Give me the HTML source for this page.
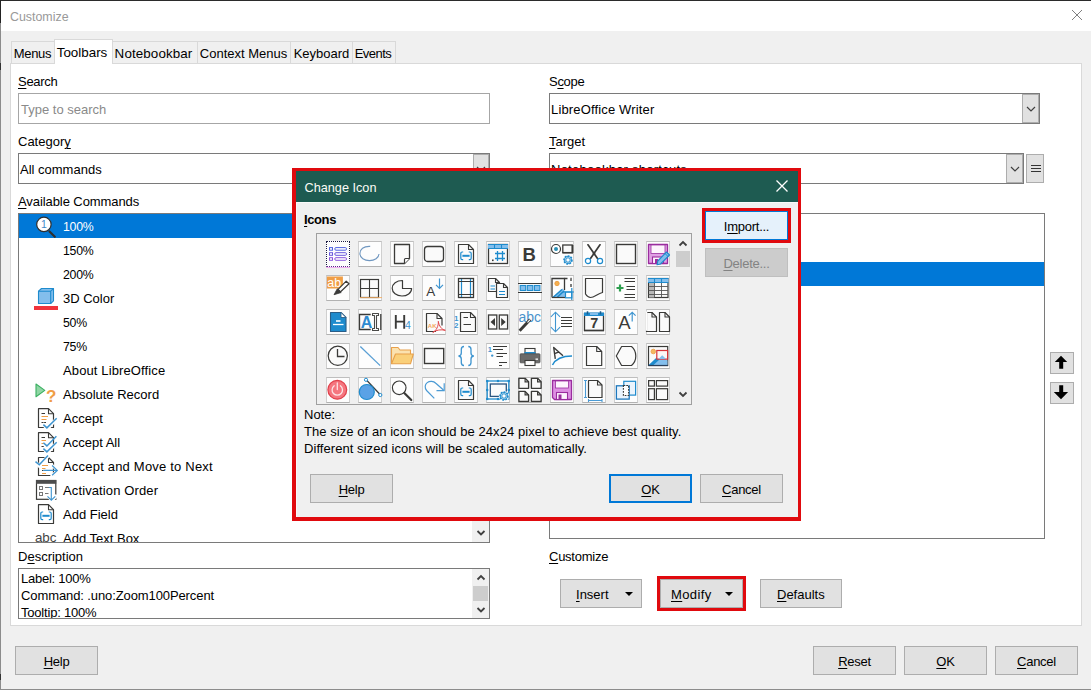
<!DOCTYPE html>
<html lang="en">
<head>
<meta charset="utf-8">
<title>Customize</title>
<style>
*{box-sizing:border-box;margin:0;padding:0}
html,body{width:1091px;height:690px;overflow:hidden}
body{background:#f0f0f0;font-family:"Liberation Sans",sans-serif;font-size:13px;color:#000;position:relative;line-height:16px}
.abs{position:absolute}
u{text-decoration:underline;text-underline-offset:1.5px;text-decoration-thickness:1px}
.lbl{position:absolute;white-space:nowrap;height:16px;line-height:16px}
.field{position:absolute;background:#fff;border:1px solid #7a7a7a}
.btn{position:absolute;background:#e1e1e1;border:1px solid #adadad;text-align:center;white-space:nowrap;line-height:16px}
.btn span{position:absolute;left:0;right:0;text-align:center;letter-spacing:-0.25px}
.ddbtn{position:absolute;background:#e1e1e1;border:1px solid #adadad}
/* title bar */
#titlebar{left:0;top:0;width:1091px;height:31px;background:#fff}
#topline{left:0;top:0;width:1091px;height:1px;background:#2b2b2b}
#leftline{left:0;top:0;width:1px;height:690px;background:#8c8c8c}
#leftdark{left:0;top:0;width:1px;height:23px;background:#222}
#botline{left:0;top:689px;width:1091px;height:1px;background:#8c8c8c}
#title{left:10px;top:9px;font-size:12.4px;color:#999}
/* tabs */
.tab{position:absolute;top:41px;height:23px;font-size:13px;background:#f0f0f0;border:1px solid #d9d9d9;border-bottom:none;white-space:nowrap;text-align:center;line-height:16px;padding-top:4px}
.tab.sel{top:39px;height:25px;background:#fff;z-index:3;padding-top:5px}
#panel{left:10px;top:63px;width:1072px;height:563px;background:#fff;border:1px solid #d9d9d9}
/* list */
.row{position:absolute;left:0;height:24px;width:100%;white-space:nowrap}
.row span{position:absolute;left:44px;top:5px;line-height:16px}
.row svg{position:absolute;left:15px;top:0}
.cell{position:absolute;width:24px;height:26px;background:#fdfdfd;border:1px solid #cfcfcf;border-top-color:#bebebe;border-bottom-color:#b2b2b2}
.cell svg{position:absolute;left:-1px;top:0px;overflow:visible}
.cell.sel{border:1px dotted #1c1c44;border-bottom-color:#5a2a8a;box-shadow:0 1px 0 #f0b0f0}
.cell text{font-family:"Liberation Sans",sans-serif}
</style>
</head>
<body>
<!-- window chrome -->
<div class="abs" id="titlebar"></div>
<div class="abs" id="topline"></div>
<div class="abs" id="leftline"></div>
<div class="abs" id="leftdark"></div>
<div class="abs" id="botline"></div>
<div class="abs" style="left:0;top:63px;width:1px;height:7px;background:#333"></div>
<div class="abs" style="left:0;top:674px;width:1px;height:6px;background:#333"></div>
<div class="lbl" id="title">Customize</div>
<svg class="abs" style="left:1071px;top:9px" width="13" height="13" viewBox="0 0 13 13"><path d="M1 1 L11 11 M11 1 L1 11" stroke="#808080" stroke-width="1" fill="none"/></svg>

<!-- tabs -->
<div class="tab" style="left:11px;width:44px;letter-spacing:-0.3px;padding-right:1px">Menus</div>
<div class="tab sel" style="left:54px;width:59px;padding-right:3px;font-size:13.4px">Toolbars</div>
<div class="tab" style="left:112px;width:86px;padding-right:3px;letter-spacing:0.1px;font-size:13.4px">Notebookbar</div>
<div class="tab" style="left:197px;width:94px;padding-right:1px">Context Menus</div>
<div class="tab" style="left:290px;width:63px">Keyboard</div>
<div class="tab" style="left:352px;width:44px;letter-spacing:-0.5px;padding-right:2px">Events</div>
<div class="abs" id="panel"></div>

<!-- left column -->
<div class="lbl" style="left:18px;top:74px;letter-spacing:-0.3px"><u>S</u>earch</div>
<div class="field" style="left:18px;top:93px;width:472px;height:31px;border-color:#a6a6a6"></div>
<div class="lbl" style="left:21px;top:102px;color:#8a8a8a">Type to search</div>
<div class="lbl" style="left:18px;top:134px">Categor<u>y</u></div>
<div class="field" style="left:18px;top:153px;width:472px;height:31px"></div>
<div class="ddbtn" style="left:473px;top:154px;width:16px;height:29px"></div>
<svg class="abs" style="left:475.5px;top:166px" width="10" height="6" viewBox="0 0 10 6"><path d="M1 1 L5 5 L9 1" fill="none" stroke="#404040" stroke-width="1.2"/></svg>
<div class="lbl" style="left:20px;top:162px">All commands</div>
<div class="lbl" style="left:18px;top:194px;letter-spacing:-0.08px"><u>A</u>vailable Commands</div>

<div class="field" id="leftlist" style="left:18px;top:213px;width:472px;height:330px;overflow:hidden">
  <div class="row" style="top:0;background:#0078d7;color:#fff"><svg width="24" height="24" viewBox="0 0 24 24" style="overflow:visible"><path d="M15.5 17.5 L20.8 22.8" stroke="#2e2e2e" stroke-width="2.2" stroke-linecap="round"/><circle cx="9.9" cy="10.4" r="7.2" fill="#fff" stroke="#2e2e2e" stroke-width="1.2"/><text x="9.9" y="14.3" font-size="10.5" text-anchor="middle" fill="#3f88c8" font-family="Liberation Sans, sans-serif">1</text></svg><span style="font-size:12.3px;letter-spacing:-0.25px">100%</span></div>
  <div class="row" style="top:24px"><span style="font-size:12.3px;letter-spacing:-0.25px">150%</span></div>
  <div class="row" style="top:48px"><span style="font-size:12.3px;letter-spacing:-0.25px">200%</span></div>
  <div class="row" style="top:72px"><svg width="24" height="24" viewBox="0 0 24 24" style="overflow:visible"><path d="M4.5 5.2 L7.5 2.5 H19.5 V14.8 L16.7 17.5 H4.5 Z" fill="#83beec" stroke="#1e8bcd" stroke-width="1.1" stroke-linejoin="round"/><path d="M4.5 5.2 H16.7 V17.5 M16.7 5.2 L19.5 2.5" fill="none" stroke="#1e8bcd" stroke-width="1.1" stroke-linejoin="round"/><rect x="0" y="20" width="24" height="4" fill="#f0343c"/></svg><span>3D Color</span></div>
  <div class="row" style="top:96px"><span style="font-size:12.3px;letter-spacing:-0.25px">50%</span></div>
  <div class="row" style="top:120px"><span style="font-size:12.3px;letter-spacing:-0.25px">75%</span></div>
  <div class="row" style="top:144px"><span style="letter-spacing:0.12px">About LibreOffice</span></div>
  <div class="row" style="top:168px"><svg width="24" height="24" viewBox="0 0 24 24" style="overflow:visible"><path d="M2 2 V14.8 L10.8 8.4 Z" fill="#8fd6a4" stroke="#3bb062" stroke-width="1.1" stroke-linejoin="round"/><text x="17.2" y="19.5" font-size="17" font-weight="bold" text-anchor="middle" fill="#f09e46" font-family="Liberation Sans, sans-serif">?</text></svg><span>Absolute Record</span></div>
  <div class="row" style="top:192px"><svg width="24" height="24" viewBox="0 0 24 24" style="overflow:visible"><path d="M4.5 2.7 H14.5 L19.5 7.7 V21.5 H4.5 Z" fill="#fff" stroke="#3a3a38" stroke-width="1.2" stroke-linejoin="round"/><path d="M14.5 2.7 V7.7 H19.5" fill="none" stroke="#3a3a38" stroke-width="1.1" stroke-linejoin="round"/><path d="M7.5 7.5 H11 M7.5 16.5 H12" stroke="#3a3a38" stroke-width="1"/><path d="M7.5 10.5 H14 M7.5 13.5 H12.5" stroke="#f09e46" stroke-width="1"/><path d="M8.5 17.5 L13.5 23 L24 11" stroke="#fff" stroke-width="3.4" fill="none"/><path d="M9.4 18.6 L12.9 21.9 L22.7 12.2" stroke="#3f95d0" stroke-width="1.5" fill="none"/></svg><span>Accept</span></div>
  <div class="row" style="top:216px"><svg width="24" height="24" viewBox="0 0 24 24" style="overflow:visible"><path d="M4.5 2.7 H14.5 L19.5 7.7 V21.5 H4.5 Z" fill="#fff" stroke="#3a3a38" stroke-width="1.2" stroke-linejoin="round"/><path d="M14.5 2.7 V7.7 H19.5" fill="none" stroke="#3a3a38" stroke-width="1.1" stroke-linejoin="round"/><path d="M7.5 7.5 H11 M7.5 16.5 H10" stroke="#3a3a38" stroke-width="1"/><path d="M7.5 10.5 H12 M7.5 13.5 H9.5" stroke="#f09e46" stroke-width="1"/><path d="M8.5 17.5 L13.5 23 L24 11" stroke="#fff" stroke-width="3.2" fill="none"/><path d="M9.4 12.8 L12.9 15.9 L22.4 6.2" stroke="#3f95d0" stroke-width="1.5" fill="none"/><path d="M9.4 18.6 L12.9 21.9 L22.7 12.2" stroke="#3f95d0" stroke-width="1.5" fill="none"/></svg><span>Accept All</span></div>
  <div class="row" style="top:240px"><svg width="24" height="24" viewBox="0 0 24 24" style="overflow:visible"><path d="M4.5 3.5 H14.5 L19.5 8.5 V21.5 H4.5 Z" fill="#fff" stroke="#3a3a38" stroke-width="1.2" stroke-linejoin="round"/><path d="M14.5 3.5 V8.5 H19.5" fill="none" stroke="#3a3a38" stroke-width="1.1" stroke-linejoin="round"/><path d="M0.5 7 L5.3 12 L15 0.8" stroke="#fff" stroke-width="3.4" fill="none"/><path d="M8 11.5 H14 M8 14.5 H11.5 M8 19.5 H12" stroke="#f09e46" stroke-width="1"/><path d="M8 16.5 H9.5" stroke="#3a3a38" stroke-width="1"/><path d="M10 12 H24 V21 H10 Z" fill="#fff" opacity="0.0"/><path d="M1.5 7.7 L5.3 10.8 L14 1.5" stroke="#3f95d0" stroke-width="1.5" fill="none"/><path d="M17 10.5 L24 16.4 L17 22.3" stroke="#fff" stroke-width="3" fill="none"/><path d="M9.4 16.4 H23 M18.1 11.5 L23.3 16.4 L18.1 21.3" stroke="#3f95d0" stroke-width="1.2" fill="none"/></svg><span style="letter-spacing:0.2px">Accept and Move to Next</span></div>
  <div class="row" style="top:264px"><svg width="24" height="24" viewBox="0 0 24 24" style="overflow:visible"><rect x="2.5" y="2.5" width="19.3" height="18.8" fill="#fff" stroke="#3a3a38" stroke-width="1.2"/><rect x="2" y="2" width="20.3" height="3.8" fill="#4d4d4d"/><rect x="5.5" y="8.5" width="3" height="3" fill="#fff" stroke="#777" stroke-width="1"/><rect x="5.5" y="14.5" width="3" height="3" fill="#fff" stroke="#777" stroke-width="1"/><path d="M11 9.5 H15 M11 15.5 H14.5" stroke="#777" stroke-width="1"/><path d="M14 18 L18 23 L23 17" stroke="#fff" stroke-width="3" fill="none"/><path d="M15 9.5 H17.3 V22 M13.5 18.3 L17.3 22.2 L21.3 18.3" stroke="#3f95d0" stroke-width="1.1" fill="none"/></svg><span style="letter-spacing:0.12px">Activation Order</span></div>
  <div class="row" style="top:288px"><svg width="24" height="24" viewBox="0 0 24 24" style="overflow:visible"><path d="M4.5 2.7 H14.5 L19.5 7.7 V21.5 H4.5 Z" fill="#fff" stroke="#3a3a38" stroke-width="1.2" stroke-linejoin="round"/><path d="M14.5 2.7 V7.7 H19.5" fill="none" stroke="#3a3a38" stroke-width="1.1" stroke-linejoin="round"/><path d="M9.2 10 H8.2 Q6.8 10 6.8 11.4 V16.2 Q6.8 17.6 8.2 17.6 H9.2 M14.8 10 H15.8 Q17.2 10 17.2 11.4 V16.2 Q17.2 17.6 15.8 17.6 H14.8" fill="none" stroke="#1e8bcd" stroke-width="1.2"/><path d="M8.4 13.8 H15.6" stroke="#1e8bcd" stroke-width="2"/></svg><span>Add Field</span></div>
  <div class="row" style="top:312px"><svg width="24" height="24" viewBox="0 0 24 24" style="overflow:visible"><text x="11.7" y="15.9" font-size="13.4" text-anchor="middle" fill="#444" font-family="Liberation Sans, sans-serif">abc</text></svg><span>Add Text Box</span></div>
  <div class="abs" style="right:0;top:0;width:17px;height:328px;background:#f0f0f0"></div>
</div>

<div class="lbl" style="left:18px;top:549px">D<u>e</u>scription</div>
<div class="field" id="desc" style="left:18px;top:568px;width:472px;height:51px;overflow:hidden">
  <div class="lbl" style="left:2px;top:2px;letter-spacing:-0.25px">Label: 100%</div>
  <div class="lbl" style="left:2px;top:19px;letter-spacing:-0.1px">Command: .uno:Zoom100Percent</div>
  <div class="lbl" style="left:2px;top:36px;letter-spacing:-0.2px">Tooltip: 100%</div>
  <div class="abs" style="right:0;top:0;width:17px;height:49px;background:#f0f0f0"></div>
  <div class="abs" style="right:1px;top:17px;width:15px;height:15px;background:#cdcdcd"></div>
</div>

<!-- right column -->
<div class="lbl" style="left:549px;top:74px;letter-spacing:-0.3px">S<u>c</u>ope</div>
<div class="field" style="left:549px;top:93px;width:491px;height:31px"></div>
<div class="ddbtn" style="left:1022px;top:94px;width:17px;height:29px"></div>
<svg class="abs" style="left:1025.5px;top:106px" width="10" height="6" viewBox="0 0 10 6"><path d="M1 1 L5 5 L9 1" fill="none" stroke="#404040" stroke-width="1.2"/></svg>
<div class="lbl" style="left:551px;top:102px;letter-spacing:0.15px">LibreOffice Writer</div>
<div class="lbl" style="left:549px;top:134px"><u>T</u>arget</div>
<div class="field" style="left:549px;top:153px;width:475px;height:31px"></div>
<div class="ddbtn" style="left:1006px;top:154px;width:17px;height:29px"></div>
<svg class="abs" style="left:1009.5px;top:166px" width="10" height="6" viewBox="0 0 10 6"><path d="M1 1 L5 5 L9 1" fill="none" stroke="#404040" stroke-width="1.2"/></svg>
<div class="lbl" style="left:551px;top:162px;letter-spacing:0.25px">Notebookbar shortcuts</div>
<div class="btn" style="left:1026px;top:154px;width:18px;height:29px"></div>
<svg class="abs" style="left:1030px;top:163px" width="12" height="10" viewBox="0 0 12 10"><path d="M1 2.5 H11 M1 5.5 H11 M1 8.5 H11" stroke="#333" stroke-width="1.1"/></svg>

<div class="field" id="rightlist" style="left:549px;top:213px;width:496px;height:326px">
  <div class="abs" style="left:0;top:48px;width:494px;height:24px;background:#0078d7"></div>
</div>
<div class="btn" style="left:1050px;top:352px;width:24px;height:22px"></div>
<svg class="abs" style="left:1054px;top:355px" width="14" height="14" viewBox="0 0 14 14"><path d="M7 0.8 L13.2 7 H9.2 V13.8 H5.2 V7 H0.8 Z" fill="#000"/></svg>
<div class="btn" style="left:1050px;top:382px;width:24px;height:22px"></div>
<svg class="abs" style="left:1053px;top:385px" width="16" height="15" viewBox="0 0 16 15"><path d="M6.2 0.2 H10.2 V7 H15.1 L8 14.2 L0.8 7 H6.2 Z" fill="#000"/></svg>

<div class="lbl" style="left:549px;top:549px;letter-spacing:-0.25px"><u>C</u>ustomize</div>
<div class="btn" style="left:560px;top:579px;width:82px;height:29px"></div>
<div class="lbl" style="left:576px;top:587px"><u>I</u>nsert</div>
<svg class="abs" style="left:625px;top:591.5px" width="8" height="4" viewBox="0 0 8 4"><path d="M0 0 H8 L4 4 Z" fill="#000"/></svg>
<div class="abs" style="left:657px;top:576px;width:89px;height:35px;background:#e00a0e"></div>
<div class="btn" style="left:660px;top:579px;width:83px;height:29px"></div>
<div class="lbl" style="left:671px;top:587px;letter-spacing:0.4px"><u>M</u>odify</div>
<svg class="abs" style="left:725px;top:591.5px" width="8" height="4" viewBox="0 0 8 4"><path d="M0 0 H8 L4 4 Z" fill="#000"/></svg>
<div class="btn" style="left:760px;top:579px;width:82px;height:29px"></div>
<div class="lbl" style="left:777px;top:587px"><u>D</u>efaults</div>

<!-- bottom buttons -->
<div class="btn" style="left:15px;top:646px;width:83px;height:29px"><span style="top:7px"><u>H</u>elp</span></div>
<div class="btn" style="left:813px;top:646px;width:83px;height:29px"><span style="top:7px"><u>R</u>eset</span></div>
<div class="btn" style="left:904px;top:646px;width:83px;height:29px"><span style="top:7px"><u>O</u>K</span></div>
<div class="btn" style="left:995px;top:646px;width:83px;height:29px"><span style="top:7px"><u>C</u>ancel</span></div>

<svg class="abs" style="left:473px;top:528px" width="16" height="10" viewBox="0 0 16 10"><path d="M4.5 3 L8 6.5 L11.5 3" fill="none" stroke="#404040" stroke-width="1.8"/></svg>
<svg class="abs" style="left:473px;top:573px" width="16" height="10" viewBox="0 0 16 10"><path d="M4.5 6.5 L8 3 L11.5 6.5" fill="none" stroke="#404040" stroke-width="1.8"/></svg>
<svg class="abs" style="left:473px;top:605px" width="16" height="10" viewBox="0 0 16 10"><path d="M4.5 3 L8 6.5 L11.5 3" fill="none" stroke="#404040" stroke-width="1.8"/></svg>
<!-- DIALOG -->
<div class="abs" id="dlg" style="left:292px;top:168px;width:509px;height:353px;background:#e00a0e">
  <div class="abs" style="left:3.5px;top:3.4px;width:502px;height:345.6px;background:#f0f0f0"></div>
  <div class="abs" style="left:3.5px;top:3.4px;width:502px;height:30.4px;background:#1e5b51"></div>
  <div class="abs" style="left:3.5px;top:33.8px;width:502px;height:1px;background:#fafafa"></div>
  <div class="abs" style="left:3.5px;top:33.8px;width:1px;height:315px;background:#f8f8f8"></div>
  <div class="lbl" style="left:12.5px;top:12px;color:#fbfbf6;font-size:12.7px">Change Icon</div>
  <svg class="abs" style="left:483px;top:11px" width="14" height="14" viewBox="0 0 14 14"><path d="M1.5 1.5 L12.5 12.5 M12.5 1.5 L1.5 12.5" stroke="#fff" stroke-width="1.3" fill="none"/></svg>
  <div class="lbl" style="left:12px;top:44px;font-weight:bold;letter-spacing:-0.4px"><u>I</u>cons</div>
  <!-- icon grid -->
  <div class="abs" id="grid" style="left:24px;top:65px;width:376px;height:172px;border:1px solid #a0a0a0;background:#f0f0f0;overflow:hidden">
<div class="cell sel" style="left:9px;top:7px"><svg width="24" height="24" viewBox="0 0 24 24"><rect x="3.5" y="5.6" width="3" height="2.6" fill="#fff" stroke="#4f62e0" stroke-width="1"/><rect x="8.8" y="5.6" width="11.7" height="2.6" rx="1.2" fill="#fff" stroke="#4f62e0" stroke-width="1"/><rect x="3.5" y="10.7" width="3" height="2.6" fill="#fff" stroke="#6a59dc" stroke-width="1"/><rect x="8.8" y="10.7" width="11.7" height="2.6" rx="1.2" fill="#fff" stroke="#6a59dc" stroke-width="1"/><rect x="3.5" y="15.7" width="3" height="2.6" fill="#fff" stroke="#8a55dc" stroke-width="1"/><rect x="8.8" y="15.7" width="11.7" height="2.6" rx="1.2" fill="#fff" stroke="#8a55dc" stroke-width="1"/></svg></div>
<div class="cell" style="left:41px;top:7px"><svg width="24" height="24" viewBox="0 0 24 24"><path d="M12.2 4.4 C5.5 4 1.9 7.5 1.9 11.5 C1.9 16 6.5 18.6 11.5 18.6 C16.5 18.6 20.9 16 20.9 12" fill="none" stroke="#7097c0" stroke-width="1.1"/></svg></div>
<div class="cell" style="left:73px;top:7px"><svg width="24" height="24" viewBox="0 0 24 24"><path d="M4.5 2.5 H19.5 V16.5 L14.5 21.5 H4.5 Z" fill="#fafafa" stroke="#3a3a38" stroke-width="1.3" stroke-linejoin="round"/><path d="M14.5 21.5 V17.5 Q14.5 16.5 15.5 16.5 H19.5" fill="#fff" stroke="#3a3a38" stroke-width="1.2" stroke-linejoin="round"/></svg></div>
<div class="cell" style="left:105px;top:7px"><svg width="24" height="24" viewBox="0 0 24 24"><rect x="2.5" y="4.5" width="19" height="15" rx="3" fill="#fafafa" stroke="#3a3a38" stroke-width="1.3"/></svg></div>
<div class="cell" style="left:137px;top:7px"><svg width="24" height="24" viewBox="0 0 24 24"><path d="M4.5 2.5 H14.5 L19.5 7.5 V21.5 H4.5 Z" fill="#fafafa" stroke="#3a3a38" stroke-width="1.2" stroke-linejoin="round"/><path d="M14.5 2.5 V7.5 H19.5" fill="none" stroke="#3a3a38" stroke-width="1.1" stroke-linejoin="round"/><path d="M9.2 10 H8.2 Q6.8 10 6.8 11.4 V16.2 Q6.8 17.6 8.2 17.6 H9.2 M14.8 10 H15.8 Q17.2 10 17.2 11.4 V16.2 Q17.2 17.6 15.8 17.6 H14.8" fill="none" stroke="#1e8bcd" stroke-width="1.2"/><path d="M8.4 13.8 H15.6" stroke="#1e8bcd" stroke-width="2"/></svg></div>
<div class="cell" style="left:169px;top:7px"><svg width="24" height="24" viewBox="0 0 24 24"><rect x="2.5" y="2.5" width="19" height="19" fill="#fafafa" stroke="#3a3a38" stroke-width="1.3"/><rect x="2" y="2" width="20" height="4.5" fill="#83beec"/><path d="M2 2.5 H22 M2 6.5 H22 M8.5 2 V6.5 M15.5 2 V6.5" stroke="#1e8bcd" stroke-width="1.1"/><path d="M11.5 9 V19 M16.5 9 V19 M9 11.5 H19 M9 16.5 H19" stroke="#1e8bcd" stroke-width="1.3" fill="none"/><rect x="6" y="17.5" width="1.6" height="1.6" fill="#3a3a38"/></svg></div>
<div class="cell" style="left:201px;top:7px"><svg width="24" height="24" viewBox="0 0 24 24"><text x="11.2" y="18.6" font-size="18.5" font-weight="bold" text-anchor="middle" fill="#3a3a38">B</text></svg></div>
<div class="cell" style="left:233px;top:7px"><svg width="24" height="24" viewBox="0 0 24 24"><circle cx="6" cy="7" r="4.5" fill="#fff" stroke="#3a3a38" stroke-width="1.2"/><circle cx="6" cy="7" r="2" fill="#2a8fb5"/><rect x="12.8" y="3" width="9.4" height="7.6" fill="#fafafa" stroke="#3a3a38" stroke-width="1.3"/><path d="M12.5 10.8 H23 M22.6 3 V11" stroke="#3a3a38" stroke-width="1.6"/><g fill="none" stroke="#1e8bcd" stroke-width="1"><circle cx="18" cy="18" r="2.25"/><circle cx="18" cy="18" r="4.0" stroke-width="1.6" stroke-dasharray="1.8 1.2"/><circle cx="18" cy="18" r="3.5999999999999996" stroke-width="0.9"/></g></svg></div>
<div class="cell" style="left:265px;top:7px"><svg width="24" height="24" viewBox="0 0 24 24"><path d="M6 2.8 L15.5 16.5 M18 2.8 L8.5 16.5" stroke="#3a3a38" stroke-width="1.7" fill="none" stroke-linecap="round"/><path d="M10.5 11.5 L12 9.8 L13.5 11.5 L12 13.6 Z" fill="#3a3a38"/><circle cx="6" cy="19" r="2.6" fill="#fff" stroke="#1e8bcd" stroke-width="1.2"/><circle cx="18" cy="19" r="2.6" fill="#fff" stroke="#1e8bcd" stroke-width="1.2"/></svg></div>
<div class="cell" style="left:297px;top:7px"><svg width="24" height="24" viewBox="0 0 24 24"><rect x="2.5" y="2.5" width="19" height="19" fill="#fafafa" stroke="#3a3a38" stroke-width="1.4"/></svg></div>
<div class="cell" style="left:329px;top:7px"><svg width="24" height="24" viewBox="0 0 24 24"><path d="M2.5 2.5 H21.5 V21.5 H2.5 Z" fill="#e0a0e4" stroke="#9a2d9e" stroke-width="1.3" stroke-linejoin="round"/><rect x="5" y="3" width="14" height="8.5" fill="#fdf3fd" stroke="#9a2d9e" stroke-width="0.8"/><rect x="6.5" y="15" width="11" height="6.5" fill="#fdf3fd" stroke="#9a2d9e" stroke-width="1.1"/><rect x="9" y="17" width="3" height="4.5" fill="#9a2d9e"/><path d="M20.5 10 L23.5 13 L14.5 22 L11 22.8 L11.8 19 Z" fill="#83beec" stroke="#1e8bcd" stroke-width="1.1" stroke-linejoin="round"/><path d="M19 11.5 L22 14.5" stroke="#1e8bcd" stroke-width="1"/></svg></div>
<div class="cell" style="left:9px;top:41px"><svg width="24" height="24" viewBox="0 0 24 24"><rect x="0.9" y="0.5" width="16" height="12" fill="#f09e46"/><text x="8.2" y="11.3" font-size="12.5" text-anchor="middle" fill="#fff">ab</text><path d="M20.2 5.2 L23 7.8 L14.6 15.8 L12.1 13.3 Z" fill="#fff" stroke="#3a3a38" stroke-width="1.2" stroke-linejoin="round"/><path d="M11.3 12.8 L15.2 16.5 L8 18.7 Z" fill="#3a3a38" stroke="#3a3a38" stroke-width="0.8" stroke-linejoin="round"/></svg></div>
<div class="cell" style="left:41px;top:41px"><svg width="24" height="24" viewBox="0 0 24 24"><rect x="2.5" y="3.5" width="18" height="18" fill="#fafafa" stroke="#3a3a38" stroke-width="1.2"/><path d="M11.5 3.5 V21.5 M2.5 12.5 H20.5" stroke="#3a3a38" stroke-width="1.1"/><path d="M2 21.6 H24" stroke="#f2ab62" stroke-width="0.9" fill="none"/></svg></div>
<div class="cell" style="left:73px;top:41px"><svg width="24" height="24" viewBox="0 0 24 24"><path d="M12.5 4.5 V12.5 H21.6 C21.6 17 17 20 12 20 C6.5 20 2.2 16.8 2.2 12.3 C2.2 8 6.5 4.5 12.5 4.5 Z" fill="#fafafa" stroke="#3a3a38" stroke-width="1.2" stroke-linejoin="round"/></svg></div>
<div class="cell" style="left:105px;top:41px"><svg width="24" height="24" viewBox="0 0 24 24"><text x="8.7" y="19.5" font-size="13.5" text-anchor="middle" fill="#3a3a38">A</text><path d="M17.5 2.5 V12 M14 8.8 L17.5 12.3 L21 8.8" fill="none" stroke="#3f95d0" stroke-width="1.2"/></svg></div>
<div class="cell" style="left:137px;top:41px"><svg width="24" height="24" viewBox="0 0 24 24"><path d="M7.5 2.5 V21.5 M16.5 2.5 V21.5" stroke="#1e8bcd" stroke-width="1.2"/><rect x="4.5" y="2.5" width="15" height="19" fill="none" stroke="#3a3a38" stroke-width="1.3"/><path d="M4.5 5.5 H19.5 M4.5 18.5 H19.5" stroke="#3a3a38" stroke-width="1.1"/></svg></div>
<div class="cell" style="left:169px;top:41px"><svg width="24" height="24" viewBox="0 0 24 24"><path d="M2.5 2.5 H9.5 L13.5 6.5 V15.5 H2.5 Z" fill="#fafafa" stroke="#3a3a38" stroke-width="1.2" stroke-linejoin="round"/><path d="M9.5 2.5 V6.5 H13.5" fill="none" stroke="#3a3a38" stroke-width="1.1"/><path d="M4.5 10 H9 M4.5 13 H9" stroke="#1e8bcd" stroke-width="1.1"/><path d="M10.5 7.5 H17.5 L21.5 11.5 V21.5 H10.5 Z" fill="#fafafa" stroke="#3a3a38" stroke-width="1.2" stroke-linejoin="round"/><path d="M17.5 7.5 V11.5 H21.5" fill="none" stroke="#3a3a38" stroke-width="1.1"/><path d="M13 15.5 H19 M13 18.5 H19" stroke="#1e8bcd" stroke-width="1.1"/></svg></div>
<div class="cell" style="left:201px;top:41px"><svg width="24" height="24" viewBox="0 0 24 24"><path d="M0 7.5 H24 M0 16.5 H24" stroke="#3a3a38" stroke-width="1.2"/><rect x="2.2" y="9.5" width="5.5" height="5" fill="#83beec" stroke="#1e8bcd" stroke-width="1.1"/><rect x="9.3" y="9.5" width="5.5" height="5" fill="#83beec" stroke="#1e8bcd" stroke-width="1.1"/><rect x="16.4" y="9.5" width="5.5" height="5" fill="#83beec" stroke="#1e8bcd" stroke-width="1.1"/></svg></div>
<div class="cell" style="left:233px;top:41px"><svg width="24" height="24" viewBox="0 0 24 24"><path d="M2 21.5 V2.5 H14.5 V14" fill="none" stroke="#3a3a38" stroke-width="1.3"/><path d="M14.5 2.5 H21 V14" fill="none" stroke="#3a3a38" stroke-width="1.3" stroke-dasharray="3 3"/><circle cx="7" cy="7.5" r="2.2" fill="#f5b04f" stroke="#e8973a" stroke-width="0.8"/><path d="M2.5 21.5 L12.5 12.5 L15 15 V21.5 Z" fill="#83beec"/><path d="M3 21.5 L12 13.5 M7 21.5 L14 15" stroke="#1e8bcd" stroke-width="1.6"/><path d="M2 21.5 H15" stroke="#3a3a38" stroke-width="1.2"/><rect x="15.5" y="16" width="6.3" height="5.8" fill="#fff" stroke="#1e8bcd" stroke-width="1.2"/><path d="M21.8 12 V24 M13 16 H24" stroke="#1e8bcd" stroke-width="1.2"/></svg></div>
<div class="cell" style="left:265px;top:41px"><svg width="24" height="24" viewBox="0 0 24 24"><path d="M3.5 2.5 H20.5 V16.5 C15.5 17.5 12.5 21.5 8.5 21.5 C6 21.5 4.5 19.5 3.5 18 Z" fill="#fafafa" stroke="#3a3a38" stroke-width="1.2" stroke-linejoin="round"/></svg></div>
<div class="cell" style="left:297px;top:41px"><svg width="24" height="24" viewBox="0 0 24 24"><path d="M2.5 12 H9.5 M6 8.5 V15.5" stroke="#2e9e4f" stroke-width="2.2"/><path d="M10.5 2.5 H21 M10.5 5.5 H21 M12.5 10.5 H21 M12.5 13.5 H21 M10.5 18.5 H21 M10.5 21.5 H21" stroke="#3a3a38" stroke-width="1.1"/></svg></div>
<div class="cell" style="left:329px;top:41px"><svg width="24" height="24" viewBox="0 0 24 24"><rect x="2.5" y="2.5" width="19.5" height="19" fill="#fafafa" stroke="#3a3a38" stroke-width="1.2"/><rect x="3" y="6.5" width="5" height="15" fill="#b8b8b8"/><path d="M2.5 10.5 H22 M2.5 14.5 H22 M2.5 18.5 H22 M8.5 6 V21.5 M15.5 6 V21.5" stroke="#555" stroke-width="0.9"/><rect x="2" y="2" width="20.5" height="4.5" fill="#83beec"/><path d="M2 2.5 H22.5 M2 6.5 H22.5 M8.5 2 V6.5 M15.5 2 V6.5" stroke="#1e8bcd" stroke-width="1.1"/></svg></div>
<div class="cell" style="left:9px;top:75px"><svg width="24" height="24" viewBox="0 0 24 24"><path d="M4.5 2.5 H15 L20 7.5 V21.5 H4.5 Z" fill="#1e8bcd" stroke="#2a5d87" stroke-width="1.1" stroke-linejoin="round"/><path d="M15 2.5 V7.5 H20 Z" fill="#fff" stroke="#2a5d87" stroke-width="0.9" stroke-linejoin="round"/><path d="M10 11 H14.5" stroke="#fff" stroke-width="1.6"/><path d="M7 14.5 H17.5" stroke="#fff" stroke-width="1.3"/></svg></div>
<div class="cell" style="left:41px;top:75px"><svg width="24" height="24" viewBox="0 0 24 24"><path d="M12.7 4.5 H1.5 V19.5 H12.7 M22.8 4 V20" fill="none" stroke="#3a3a38" stroke-width="1.3"/><text x="8.6" y="17.7" font-size="16" font-weight="bold" text-anchor="middle" fill="#2f8ad0">A</text><path d="M14.5 3.5 H20.5 V5.5 H18.5 V18.5 H20.5 V20.5 H14.5 V18.5 H16.5 V5.5 H14.5 Z" fill="#fff" stroke="#4a4a48" stroke-width="1.1" stroke-linejoin="round"/></svg></div>
<div class="cell" style="left:73px;top:75px"><svg width="24" height="24" viewBox="0 0 24 24"><path d="M5.8 5 V18.7 M14.2 5 V18.7 M5.8 11.6 H14.2" stroke="#3a3a38" stroke-width="1.9" fill="none"/><text x="18" y="18.6" font-size="10.5" text-anchor="middle" fill="#3f95d0">4</text></svg></div>
<div class="cell" style="left:105px;top:75px"><svg width="24" height="24" viewBox="0 0 24 24"><path d="M14 21.5 H4.5 V3.5 H15 L20 8.5 V15.5" fill="#fafafa" stroke="#3a3a38" stroke-width="1.2" stroke-linejoin="round"/><path d="M15 3.5 V8.5 H20" fill="none" stroke="#3a3a38" stroke-width="1.1" stroke-linejoin="round"/><text x="10.2" y="17.6" font-size="6" font-weight="bold" text-anchor="middle" fill="#f5a55a">AK</text><path d="M10.8 22.4 C14 21 16.8 16 16.3 11.3 C17 16 19.5 19.5 23.3 20.3 C19 19.3 14.5 19.8 10.8 22.4 Z" fill="none" stroke="#e2474b" stroke-width="1" stroke-linejoin="round"/></svg></div>
<div class="cell" style="left:137px;top:75px"><svg width="24" height="24" viewBox="0 0 24 24"><path d="M6.5 2.5 H16.5 L21.5 7.5 V21.5 H6.5 Z" fill="#fafafa" stroke="#3a3a38" stroke-width="1.2" stroke-linejoin="round"/><path d="M16.5 2.5 V7.5 H21.5" fill="none" stroke="#3a3a38" stroke-width="1.0999999999999999" stroke-linejoin="round"/><path d="M9.5 7.5 H14 M9.5 14.5 H17" stroke="#3a3a38" stroke-width="1.2"/><text x="2.3" y="11" font-size="8" font-weight="bold" text-anchor="middle" fill="#3f95d0">1</text><text x="2.3" y="18.3" font-size="8" font-weight="bold" text-anchor="middle" fill="#3f95d0">2</text></svg></div>
<div class="cell" style="left:169px;top:75px"><svg width="24" height="24" viewBox="0 0 24 24"><rect x="2.5" y="5" width="8.3" height="14" fill="#fafafa" stroke="#3a3a38" stroke-width="1.3"/><rect x="13.3" y="5" width="8.3" height="14" fill="#fafafa" stroke="#3a3a38" stroke-width="1.3"/><path d="M9 8 V16 L4.5 12 Z M15.2 8 V16 L19.7 12 Z" fill="#3a3a38"/></svg></div>
<div class="cell" style="left:201px;top:75px"><svg width="24" height="24" viewBox="0 0 24 24"><text x="11.7" y="11.6" font-size="14" text-anchor="middle" fill="#4a93cc">abc</text><path d="M1.6 20.8 L12.2 9.6" stroke="#3a3a38" stroke-width="2.9" stroke-linecap="butt"/><path d="M9.8 12.2 L11.6 10.2" stroke="#fff" stroke-width="1.1" stroke-linecap="round"/></svg></div>
<div class="cell" style="left:233px;top:75px"><svg width="24" height="24" viewBox="0 0 24 24"><path d="M5.5 2.4 V21.6 M0.9 6.8 L5.5 2.2 L10.1 6.8 M0.9 17.2 L5.5 21.8 L10.1 17.2" fill="none" stroke="#3f95d0" stroke-width="1.1"/><path d="M11 7.5 H22 M11 10.5 H22 M11 13.5 H22 M11 16.5 H22" stroke="#3a3a38" stroke-width="1.1"/></svg></div>
<div class="cell" style="left:265px;top:75px"><svg width="24" height="24" viewBox="0 0 24 24"><rect x="2.5" y="3.5" width="19" height="17" fill="#fafafa" stroke="#3a3a38" stroke-width="1.3"/><rect x="2" y="2.5" width="20" height="3.5" fill="#1e8bcd"/><rect x="8" y="2.8" width="8" height="2.2" fill="#83beec"/><path d="M5.5 1.2 V4.5 M18.5 1.2 V4.5" stroke="#1a5d8d" stroke-width="1.5"/><path d="M2 20.5 H22" stroke="#3a3a38" stroke-width="1.5"/><text x="12.2" y="18.3" font-size="14.5" font-weight="bold" text-anchor="middle" fill="#3a3a38">7</text></svg></div>
<div class="cell" style="left:297px;top:75px"><svg width="24" height="24" viewBox="0 0 24 24"><text x="10.4" y="18.6" font-size="18.5" text-anchor="middle" fill="#3a3a38">A</text><path d="M18.2 2.3 V11.5 M14.8 5.7 L18.2 2.3 L21.6 5.7" fill="none" stroke="#3f95d0" stroke-width="1.2"/></svg></div>
<div class="cell" style="left:329px;top:75px"><svg width="24" height="24" viewBox="0 0 24 24"><path d="M0.5 2.5 H6.0 L10.5 7.0 V21.5 H0.5 Z" fill="#fafafa" stroke="#3a3a38" stroke-width="1.2" stroke-linejoin="round"/><path d="M6.0 2.5 V7.0 H10.5" fill="none" stroke="#3a3a38" stroke-width="1.0999999999999999" stroke-linejoin="round"/><path d="M13.5 2.5 H19.0 L23.5 7.0 V21.5 H13.5 Z" fill="#fafafa" stroke="#3a3a38" stroke-width="1.2" stroke-linejoin="round"/><path d="M19.0 2.5 V7.0 H23.5" fill="none" stroke="#3a3a38" stroke-width="1.0999999999999999" stroke-linejoin="round"/><rect x="-0.3" y="1.5" width="1.6" height="19.3" fill="#fdfdfd"/></svg></div>
<div class="cell" style="left:9px;top:109px"><svg width="24" height="24" viewBox="0 0 24 24"><circle cx="11.8" cy="11.8" r="9.6" fill="#fafafa" stroke="#3a3a38" stroke-width="1.2"/><path d="M11.5 5 V12.5 H18.5" fill="none" stroke="#3a3a38" stroke-width="1.3"/></svg></div>
<div class="cell" style="left:41px;top:109px"><svg width="24" height="24" viewBox="0 0 24 24"><path d="M2.3 2.5 L22.2 21.6" stroke="#5a9fd4" stroke-width="1.3"/></svg></div>
<div class="cell" style="left:73px;top:109px"><svg width="24" height="24" viewBox="0 0 24 24"><path d="M1.5 19.5 V3.5 H8 L10 6 H20.5 V10" fill="#fbe2b0" stroke="#e8a04a" stroke-width="1.1" stroke-linejoin="round"/><path d="M1.5 19.8 L5.5 10 H23.3 L20.5 19.8 Z" fill="#fad07a" stroke="#e8a04a" stroke-width="1.1" stroke-linejoin="round"/></svg></div>
<div class="cell" style="left:105px;top:109px"><svg width="24" height="24" viewBox="0 0 24 24"><rect x="2.5" y="4.5" width="19.2" height="15" fill="#fafafa" stroke="#3a3a38" stroke-width="1.4"/></svg></div>
<div class="cell" style="left:137px;top:109px"><svg width="24" height="24" viewBox="0 0 24 24"><path d="M10 2.5 C7.5 2.5 7.3 3.5 7.3 5.5 V9 C7.3 11 6.5 11.8 4.5 12 C6.5 12.2 7.3 13 7.3 15 V18.5 C7.3 20.5 7.5 21.5 10 21.5" fill="none" stroke="#3f95d0" stroke-width="1.3"/><path d="M14.3 2.5 C16.8 2.5 17 3.5 17 5.5 V9 C17 11 17.8 11.8 19.8 12 C17.8 12.2 17 13 17 15 V18.5 C17 20.5 16.8 21.5 14.3 21.5" fill="none" stroke="#3f95d0" stroke-width="1.3"/></svg></div>
<div class="cell" style="left:169px;top:109px"><svg width="24" height="24" viewBox="0 0 24 24"><text x="3.8" y="7.8" font-size="7.5" font-weight="bold" text-anchor="middle" fill="#3f95d0">1</text><circle cx="6.2" cy="11.6" r="1.2" fill="#3f95d0"/><path d="M7 2.5 H21 M7 5.5 H17 M10.5 9.5 H21 M10.5 12.5 H17 M13 18.5 H21 M13 21.5 H16" stroke="#3a3a38" stroke-width="1.1"/></svg></div>
<div class="cell" style="left:201px;top:109px"><svg width="24" height="24" viewBox="0 0 24 24"><rect x="7" y="4.5" width="10" height="6" fill="#fff" stroke="#3a3a38" stroke-width="1.1"/><rect x="6.5" y="8" width="11" height="2.2" fill="#1e8bcd"/><rect x="2" y="9.8" width="20" height="9" rx="0.8" fill="#6b6b6b" stroke="#4f4f4f" stroke-width="0.8"/><rect x="7" y="16.5" width="10" height="5" fill="#fff" stroke="#3a3a38" stroke-width="1.1"/><rect x="17.5" y="14.5" width="2.5" height="1.3" fill="#fff"/></svg></div>
<div class="cell" style="left:233px;top:109px"><svg width="24" height="24" viewBox="0 0 24 24"><path d="M5.3 14.8 L3.7 3.5 L13 11.8 M4.6 9.6 L9 7.8" fill="none" stroke="#3a3a38" stroke-width="1.4" stroke-linejoin="round"/><path d="M2.5 21 C5.5 15 12.5 12 22 12" fill="none" stroke="#1e8bcd" stroke-width="1.5"/></svg></div>
<div class="cell" style="left:265px;top:109px"><svg width="24" height="24" viewBox="0 0 24 24"><path d="M4.5 2.5 H14.7 L19.7 7.5 V21.5 H4.5 Z" fill="#fafafa" stroke="#3a3a38" stroke-width="1.2" stroke-linejoin="round"/><path d="M14.7 2.5 V7.5 H19.7" fill="none" stroke="#3a3a38" stroke-width="1.0999999999999999" stroke-linejoin="round"/></svg></div>
<div class="cell" style="left:297px;top:109px"><svg width="24" height="24" viewBox="0 0 24 24"><path d="M2.3 12 L7.6 2.5 H17.5 C20.5 5 21.8 8.5 21.8 12 C21.8 15.5 20.5 19 17.5 21.5 H7.6 Z" fill="#fafafa" stroke="#3a3a38" stroke-width="1.2" stroke-linejoin="round"/></svg></div>
<div class="cell" style="left:329px;top:109px"><svg width="24" height="24" viewBox="0 0 24 24"><rect x="2.5" y="2.5" width="19.2" height="19" fill="#fafafa" stroke="#3a3a38" stroke-width="1.2"/><path d="M2.8 21 L13 11.5 L17 15 L18.5 13.5 L21.5 16.5 V21 Z" fill="#83beec"/><path d="M2.8 21 L11 13.2 L13.5 15.5 L7.5 21 Z" fill="#1e8bcd"/><circle cx="7.3" cy="7.5" r="2.3" fill="#f5b860" stroke="#ee9c45" stroke-width="0.8"/><rect x="10.8" y="6.5" width="10.8" height="8.6" fill="#fdf6f6" stroke="#d8343a" stroke-width="1.2"/><path d="M12.5 15 L16.2 11.3 L20 15 Z" fill="#83beec"/><path d="M2.3 21.5 H22" stroke="#2a3f5a" stroke-width="1.2"/></svg></div>
<div class="cell" style="left:9px;top:143px"><svg width="24" height="24" viewBox="0 0 24 24"><circle cx="11.3" cy="11.8" r="9.4" fill="#f5767f" stroke="#e0404b" stroke-width="1.2"/><path d="M8.2 7.8 A5.2 5.2 0 1 0 14.4 7.8 M11.3 5 V11.5" fill="none" stroke="#fde3e5" stroke-width="1.3" stroke-linecap="round"/></svg></div>
<div class="cell" style="left:41px;top:143px"><svg width="24" height="24" viewBox="0 0 24 24"><path d="M8 1.5 L22.5 17" stroke="#3a3a38" stroke-width="1.2"/><circle cx="8.8" cy="14" r="7.5" fill="#5aa2e6" stroke="#1e8bcd" stroke-width="1.2"/><circle cx="8" cy="1.8" r="1.6" fill="#fff" stroke="#1e8bcd" stroke-width="1"/><circle cx="22.3" cy="17" r="1.6" fill="#fff" stroke="#1e8bcd" stroke-width="1"/></svg></div>
<div class="cell" style="left:73px;top:143px"><svg width="24" height="24" viewBox="0 0 24 24"><circle cx="9.2" cy="9.8" r="6.8" fill="#fdfdfd" stroke="#3a3a38" stroke-width="1.15"/><path d="M14.3 15 L21.3 22" stroke="#3a3a38" stroke-width="2.2" stroke-linecap="round"/></svg></div>
<div class="cell" style="left:105px;top:143px"><svg width="24" height="24" viewBox="0 0 24 24"><path d="M12.3 20.3 L4.6 12.5 C2.5 10 2.8 6.5 5.2 4.6 C7.8 2.6 11.5 3 13.8 5.2 L21.5 12" fill="none" stroke="#4a9ad4" stroke-width="1.2"/><path d="M22.2 5.2 V12.6 H14.5" fill="none" stroke="#4a9ad4" stroke-width="1.2"/></svg></div>
<div class="cell" style="left:137px;top:143px"><svg width="24" height="24" viewBox="0 0 24 24"><path d="M4.5 2.5 H14.5 L19.5 7.5 V21.5 H4.5 Z" fill="#fafafa" stroke="#3a3a38" stroke-width="1.2" stroke-linejoin="round"/><path d="M14.5 2.5 V7.5 H19.5" fill="none" stroke="#3a3a38" stroke-width="1.1" stroke-linejoin="round"/><path d="M9.2 10 H8.2 Q6.8 10 6.8 11.4 V16.2 Q6.8 17.6 8.2 17.6 H9.2 M14.8 10 H15.8 Q17.2 10 17.2 11.4 V16.2 Q17.2 17.6 15.8 17.6 H14.8" fill="none" stroke="#1e8bcd" stroke-width="1.2"/><path d="M8.4 13.8 H15.6" stroke="#1e8bcd" stroke-width="2"/></svg></div>
<div class="cell" style="left:169px;top:143px"><svg width="24" height="24" viewBox="0 0 24 24"><rect x="1.2" y="3" width="21.6" height="18" fill="none" stroke="#1e8bcd" stroke-width="1.3"/><rect x="4.3" y="6" width="16" height="12.4" fill="#fafafa" stroke="#2a5580" stroke-width="1.3"/><rect x="0.09999999999999987" y="1.9" width="2.2" height="2.2" fill="#1e8bcd"/><rect x="10.9" y="1.9" width="2.2" height="2.2" fill="#1e8bcd"/><rect x="21.7" y="1.9" width="2.2" height="2.2" fill="#1e8bcd"/><rect x="0.09999999999999987" y="10.9" width="2.2" height="2.2" fill="#1e8bcd"/><rect x="21.7" y="10.9" width="2.2" height="2.2" fill="#1e8bcd"/><rect x="0.09999999999999987" y="19.9" width="2.2" height="2.2" fill="#1e8bcd"/><rect x="10.9" y="19.9" width="2.2" height="2.2" fill="#1e8bcd"/><circle cx="18" cy="18" r="5.2" fill="#fdfdfd"/><g fill="none" stroke="#1e8bcd" stroke-width="1"><circle cx="18" cy="18" r="2.25"/><circle cx="18" cy="18" r="4.0" stroke-width="1.6" stroke-dasharray="1.8 1.2"/><circle cx="18" cy="18" r="3.5999999999999996" stroke-width="0.9"/></g></svg></div>
<div class="cell" style="left:201px;top:143px"><svg width="24" height="24" viewBox="0 0 24 24"><path d="M0.9 0.3 H7.1 L10.6 3.8 V10.3 H0.9 Z" fill="#fafafa" stroke="#3a3a38" stroke-width="1.35" stroke-linejoin="round"/><path d="M7.1 0.3 V3.8 H10.6" fill="none" stroke="#3a3a38" stroke-width="1.2"/><path d="M13.4 0.3 H19.6 L23.1 3.8 V10.3 H13.4 Z" fill="#fafafa" stroke="#3a3a38" stroke-width="1.35" stroke-linejoin="round"/><path d="M19.6 0.3 V3.8 H23.1" fill="none" stroke="#3a3a38" stroke-width="1.2"/><path d="M0.9 13.4 H7.1 L10.6 16.9 V23.4 H0.9 Z" fill="#fafafa" stroke="#3a3a38" stroke-width="1.35" stroke-linejoin="round"/><path d="M7.1 13.4 V16.9 H10.6" fill="none" stroke="#3a3a38" stroke-width="1.2"/><path d="M13.4 13.4 H19.6 L23.1 16.9 V23.4 H13.4 Z" fill="#fafafa" stroke="#3a3a38" stroke-width="1.35" stroke-linejoin="round"/><path d="M19.6 13.4 V16.9 H23.1" fill="none" stroke="#3a3a38" stroke-width="1.2"/></svg></div>
<div class="cell" style="left:233px;top:143px"><svg width="24" height="24" viewBox="0 0 24 24"><path d="M2.5 2.5 H21.5 V21.5 H4.5 L2.5 19.5 Z" fill="#dd8fe2" stroke="#9a2d9e" stroke-width="1.3" stroke-linejoin="round"/><rect x="5.5" y="3" width="13" height="7" fill="#fdf3fd" stroke="#9a2d9e" stroke-width="0.8"/><rect x="6.5" y="14.5" width="11" height="7" fill="#fdf3fd" stroke="#9a2d9e" stroke-width="1.1"/><rect x="8.5" y="16.5" width="3" height="5" fill="#9a2d9e"/></svg></div>
<div class="cell" style="left:265px;top:143px"><svg width="24" height="24" viewBox="0 0 24 24"><path d="M6.5 2.5 H15.5 L20 7 V19.5 H6.5 Z" fill="#fafafa" stroke="#3a3a38" stroke-width="1.2" stroke-linejoin="round"/><path d="M15.5 2.5 V7 H20" fill="none" stroke="#3a3a38" stroke-width="1.1"/><path d="M3.5 2.5 V19.5 M2 2.5 H5 M2 19.5 H5 M6.5 22.5 H20 M6.5 21 V24 M20 21 V24" fill="none" stroke="#4a9ad4" stroke-width="1.1"/></svg></div>
<div class="cell" style="left:297px;top:143px"><svg width="24" height="24" viewBox="0 0 24 24"><rect x="9.8" y="3.3" width="11.8" height="13.8" fill="#eaf4fd" stroke="#1e8bcd" stroke-width="1.2"/><rect x="2.4" y="7.8" width="12.8" height="13.3" fill="#eaf4fd" stroke="#1e78bd" stroke-width="1.3"/><rect x="9.4" y="7.5" width="5.2" height="10" fill="#fdfdfd" stroke="#3a3a38" stroke-width="1.1" stroke-dasharray="1.7 1.2"/></svg></div>
<div class="cell" style="left:329px;top:143px"><svg width="24" height="24" viewBox="0 0 24 24"><rect x="2.6" y="2.6" width="5.8" height="5.5" fill="#fafafa" stroke="#3a3a38" stroke-width="1.2"/><rect x="10.4" y="2.6" width="11.2" height="5.5" fill="#fafafa" stroke="#3a3a38" stroke-width="1.2"/><rect x="2.6" y="10.7" width="5.8" height="10.9" fill="#fafafa" stroke="#3a3a38" stroke-width="1.2"/><rect x="10.4" y="10.7" width="11.2" height="10.9" fill="#fafafa" stroke="#3a3a38" stroke-width="1.2"/></svg></div>
    <div class="abs" style="left:358px;top:0;width:16px;height:170px;background:#f0f0f0"></div>
    <div class="abs" style="left:358.5px;top:17px;width:14px;height:16px;background:#cdcdcd"></div>
    <svg class="abs" style="left:358px;top:0" width="16" height="170" viewBox="0 0 16 170"><path d="M4.5 11.5 L8 8 L11.5 11.5 M4.5 158.5 L8 162 L11.5 158.5" stroke="#404040" stroke-width="1.8" fill="none"/></svg>
  </div>
  <!-- import / delete -->
  <div class="abs" style="left:410px;top:40px;width:89px;height:35px;background:#e00a0e"></div>
  <div class="btn" style="left:413px;top:43px;width:83px;height:29px;background:#e5f1fb;border-color:#0078d7"><span style="top:7px">I<u>m</u>port...</span></div>
  <div class="btn" style="left:413px;top:80px;width:83px;height:29px;background:#cccccc;border-color:#bfbfbf;color:#838383"><span style="top:7px"><u>D</u>elete...</span></div>
  <!-- note -->
  <div class="lbl" style="left:12px;top:239px">Note:</div>
  <div class="lbl" style="left:12px;top:256px;letter-spacing:0.06px">The size of an icon should be 24x24 pixel to achieve best quality.</div>
  <div class="lbl" style="left:12px;top:273px;letter-spacing:0.06px">Different sized icons will be scaled automatically.</div>
  <!-- buttons -->
  <div class="btn" style="left:18px;top:306px;width:83px;height:29px"><span style="top:7px"><u>H</u>elp</span></div>
  <div class="btn" style="left:317px;top:306px;width:83px;height:29px;border:2px solid #0078d7"><span style="top:6px"><u>O</u>K</span></div>
  <div class="btn" style="left:408px;top:306px;width:83px;height:29px"><span style="top:7px"><u>C</u>ancel</span></div>
</div>
</body>
</html>
